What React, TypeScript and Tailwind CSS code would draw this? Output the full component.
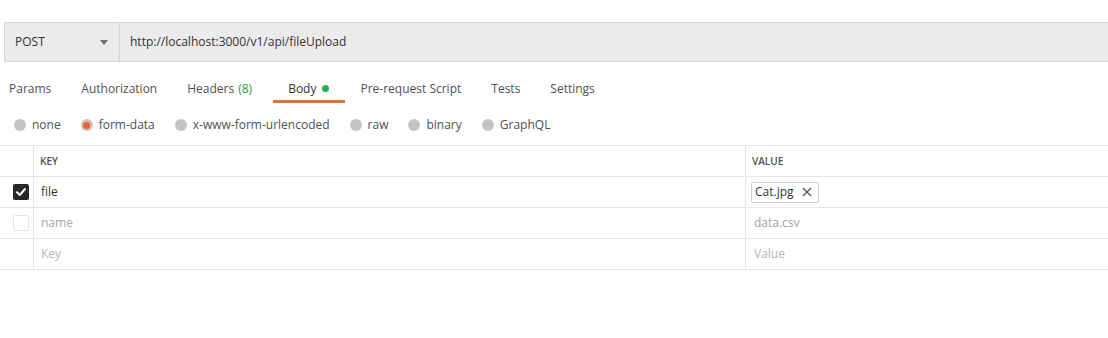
import React from 'react';

const bodyTypes = ['none', 'form-data', 'x-www-form-urlencoded', 'raw', 'binary', 'GraphQL'];

function Radio({ label, selected }: { label: string; selected?: boolean }) {
  return (
    <div className="flex items-center gap-[6px]">
      {selected ? (
        <span className="w-[12px] h-[12px] rounded-full bg-[#d9bfae] flex items-center justify-center">
          <span className="w-[7px] h-[7px] rounded-full bg-[#e8603c]" />
        </span>
      ) : (
        <span className="w-[12px] h-[12px] rounded-full bg-[#c4c4c4]" />
      )}
      <span className="text-[#505050]">{label}</span>
    </div>
  );
}

function Row({
  check,
  keyText,
  keyMuted,
  value,
}: {
  check: 'on' | 'off' | 'none';
  keyText: string;
  keyMuted?: 'light' | 'lighter';
  value: React.ReactNode;
}) {
  const keyColor = keyMuted === 'light' ? 'text-[#a8a8a8]' : keyMuted === 'lighter' ? 'text-[#b4b4b4]' : 'text-[#333333]';
  return (
    <div className="flex h-[31px] border-b border-[#e6e6e6]">
      <div className="w-[34px] border-r border-[#e6e6e6] flex items-center justify-end pr-[4px]">
        {check === 'on' && (
          <span className="w-[16px] h-[16px] rounded-[2px] bg-[#282828] flex items-center justify-center">
            <svg width="12" height="12" viewBox="0 0 12 12" fill="none">
              <path d="M2 6.3 L4.8 9 L10 3" stroke="white" strokeWidth="2" strokeLinecap="round" strokeLinejoin="round" />
            </svg>
          </span>
        )}
        {check === 'off' && <span className="w-[16px] h-[16px] rounded-[2px] border border-[#e4e4e4] bg-white" />}
      </div>
      <div className={`w-[712px] border-r border-[#e6e6e6] flex items-center pl-[7px] ${keyColor}`}>{keyText}</div>
      <div className="flex-1 flex items-center pl-[8px]">{value}</div>
    </div>
  );
}

export default function App() {
  return (
    <div
      className="w-[1108px] h-[338px] overflow-hidden bg-white text-[12px] text-[#505050]"
      style={{ fontFamily: '"Open Sans", "DejaVu Sans", sans-serif' }}
    >
      {/* Request bar */}
      <div className="pt-[22px] pl-[4px]">
        <div className="flex h-[40px] w-[1120px] bg-[#ebebeb] border border-[#d4d4d4]">
          <div className="w-[115px] flex items-center justify-between pl-[10px] pr-[11px] border-r border-[#d4d4d4] text-[#333333]">
            <span>POST</span>
            <svg width="8" height="5" viewBox="0 0 8 5">
              <path d="M0 0 H8 L4 5 Z" fill="#707070" />
            </svg>
          </div>
          <div className="flex items-center pl-[10px] text-[#333333]">http://localhost:3000/v1/api/fileUpload</div>
        </div>
      </div>

      {/* Tabs */}
      <div className="flex h-[28px] items-stretch mt-[13px]">
        <div className="flex items-center pb-[1px] ml-[9px] mr-[30px]">Params</div>
        <div className="flex items-center pb-[1px] mr-[30px]">Authorization</div>
        <div className="flex items-center pb-[1px] mr-[21px]">
          Headers <span className="ml-[4px] text-[#2e9a4a]">(8)</span>
        </div>
        <div className="relative flex items-center pb-[1px] pl-[15px] pr-[16px]">
          <span className="text-[#333333]">Body</span>
          <span className="ml-[6px] w-[7px] h-[7px] rounded-full bg-[#27ae50]" />
          <span className="absolute left-0 right-0 bottom-0 h-[3px] bg-[#dd7045]" />
        </div>
        <div className="flex items-center pb-[1px] ml-[15px] mr-[30px]">Pre-request Script</div>
        <div className="flex items-center pb-[1px] mr-[30px]">Tests</div>
        <div className="flex items-center pb-[1px]">Settings</div>
      </div>

      {/* Body types */}
      <div className="flex items-center h-[20px] mt-[12px] ml-[14px] gap-x-[20px]">
        {bodyTypes.map((t) => (
          <Radio key={t} label={t} selected={t === 'form-data'} />
        ))}
      </div>

      {/* Form-data table */}
      <div className="mt-[10px] border-t border-[#e6e6e6]">
        <div className="flex h-[31px] border-b border-[#e6e6e6] text-[10px] font-semibold text-[#505050]">
          <div className="w-[34px] border-r border-[#e6e6e6]" />
          <div className="w-[712px] border-r border-[#e6e6e6] flex items-center pl-[6px]">KEY</div>
          <div className="flex-1 flex items-center pl-[6px]">VALUE</div>
        </div>
        <Row
          check="on"
          keyText="file"
          value={
            <span className="-ml-[3px] flex items-center h-[21px] px-[3px] border border-[#cfcfcf] rounded-[2px] text-[#333333]">
              Cat.jpg
              <svg className="ml-[8px]" width="10" height="10" viewBox="0 0 10 10">
                <path d="M1 1 L9 9 M9 1 L1 9" stroke="#555" strokeWidth="1.4" />
              </svg>
              <span className="w-[3px]" />
            </span>
          }
        />
        <Row check="off" keyText="name" keyMuted="light" value={<span className="text-[#a0a0a0]">data.csv</span>} />
        <Row check="none" keyText="Key" keyMuted="lighter" value={<span className="text-[#b4b4b4]">Value</span>} />
      </div>
    </div>
  );
}
